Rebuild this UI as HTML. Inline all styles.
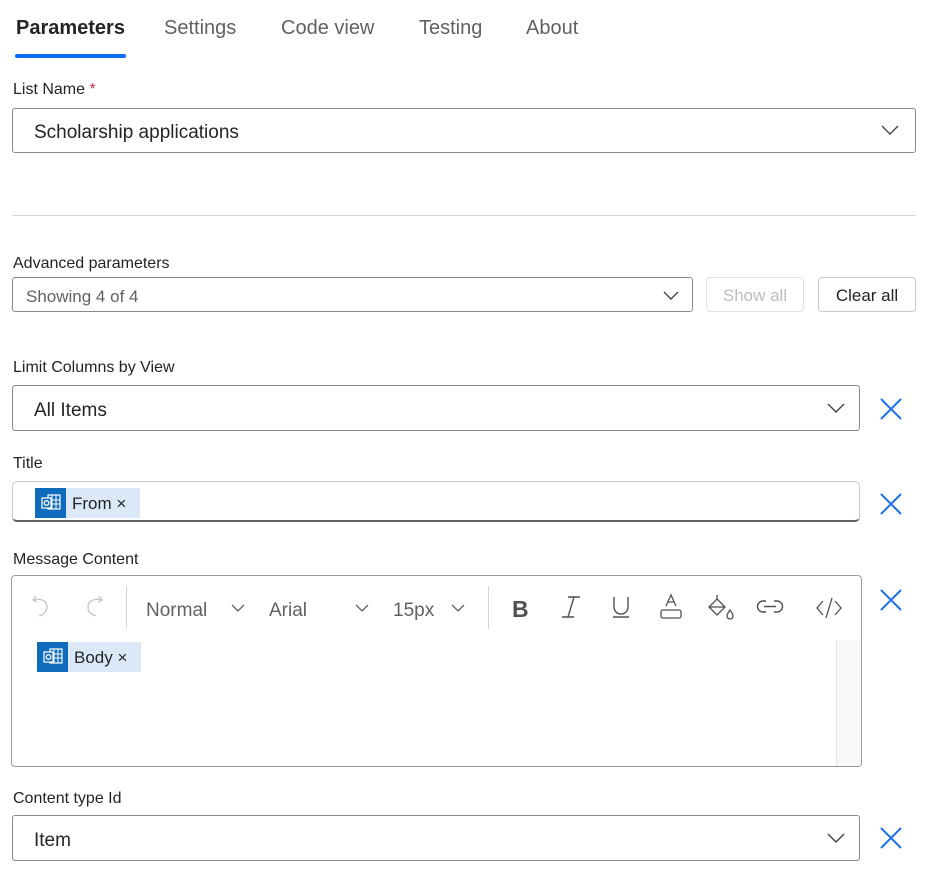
<!DOCTYPE html>
<html><head><meta charset="utf-8"><style>
*{box-sizing:border-box;margin:0;padding:0}
body{width:936px;height:888px;background:#fff;font-family:"Liberation Sans",sans-serif;color:#242424;position:relative;overflow:hidden}
.a{position:absolute;white-space:nowrap}
.tab{font-size:20px;color:#616161;top:17px}
.lbl{font-size:16px;color:#242424}
.box{position:absolute;border:1px solid #8a8a8a;border-radius:3px;background:#fff}
.big{font-size:19px;color:#242424}
.chev{position:absolute}
.x{position:absolute}
.chip{position:absolute;height:30px;background:#dbe8f8;display:flex;align-items:center;font-size:17px;color:#242424;padding-top:2px}
.chip .ic{width:31px;height:30px;background:#0f6cbd;display:flex;align-items:center;justify-content:center;margin-right:6px;margin-top:-2px}
.btn{position:absolute;border:1px solid #c8c8c8;border-radius:4px;font-size:17px;display:flex;align-items:center;justify-content:center;padding-top:2px}
</style></head><body>
<div class="a tab" style="left:16px;font-weight:bold;color:#242424">Parameters</div>
<div class="a" style="left:15px;top:54px;width:111px;height:4px;border-radius:2px;background:#0f6cfd"></div>
<div class="a tab" style="left:164px">Settings</div>
<div class="a tab" style="left:281px">Code view</div>
<div class="a tab" style="left:419px">Testing</div>
<div class="a tab" style="left:526px">About</div>

<div class="a lbl" style="left:13px;top:81px">List Name <span style="color:#c4314b">*</span></div>
<div class="box" style="left:12px;top:108px;width:904px;height:45px"></div>
<div class="a big" style="left:34px;top:122px">Scholarship applications</div>
<svg class="chev" style="left:880px;top:124px" width="20" height="12"><path d="M2 2l8 8 8-8" fill="none" stroke="#424242" stroke-width="1.4"/></svg>

<div class="a" style="left:12px;top:215px;width:904px;height:1px;background:#d6d6d6"></div>

<div class="a lbl" style="left:13px;top:255px">Advanced parameters</div>
<div class="box" style="left:12px;top:277px;width:681px;height:35px"></div>
<div class="a" style="left:26px;top:287px;font-size:17px;color:#616161">Showing 4 of 4</div>
<svg class="chev" style="left:662px;top:290px" width="18" height="11"><path d="M2 2l7 7 7-7" fill="none" stroke="#424242" stroke-width="1.4"/></svg>
<div class="btn" style="left:706px;top:277px;width:98px;height:35px;color:#bdbdbd;border-color:#e0e0e0">Show all</div>
<div class="btn" style="left:818px;top:277px;width:98px;height:35px;color:#242424">Clear all</div>

<div class="a lbl" style="left:13px;top:359px">Limit Columns by View</div>
<div class="box" style="left:12px;top:385px;width:848px;height:46px"></div>
<div class="a big" style="left:34px;top:400px">All Items</div>
<svg class="chev" style="left:826px;top:402px" width="20" height="12"><path d="M2 2l8 8 8-8" fill="none" stroke="#424242" stroke-width="1.4"/></svg>
<svg class="x" style="left:879px;top:397px" width="24" height="24"><path d="M2 2l20 20M22 2L2 22" stroke="#1a6ff0" stroke-width="2"/></svg>

<div class="a lbl" style="left:13px;top:455px">Title</div>
<div class="box" style="left:12px;top:481px;width:848px;height:41px;border-color:#c8c8c8;border-bottom:2px solid #616161;border-radius:5px"></div>
<div class="chip" style="left:35px;top:488px;width:105px"><div class="ic"><svg width="20" height="18"><rect x="7" y="1" width="12" height="14" fill="none" stroke="#fff" stroke-width="1.2"/><path d="M11 1v14M15 1v14M7 6h12M7 10h12" stroke="#fff" stroke-width="1"/><rect x="1" y="4" width="9" height="10" fill="#0f6cbd" stroke="#fff" stroke-width="1.2"/><circle cx="5.5" cy="9" r="2.3" fill="none" stroke="#fff" stroke-width="1.3"/></svg></div>From ×</div>
<svg class="x" style="left:879px;top:492px" width="24" height="24"><path d="M2 2l20 20M22 2L2 22" stroke="#1a6ff0" stroke-width="2"/></svg>

<div class="a lbl" style="left:13px;top:551px">Message Content</div>
<div class="box" style="left:11px;top:575px;width:851px;height:192px;border-color:#9a9a9a;border-radius:4px"></div>
<div class="a" style="left:836px;top:640px;width:24px;height:126px;background:#f8f8f8;border-left:1px solid #e6e6e6"></div>
<svg class="a" style="left:30px;top:592px" width="80" height="30"><path d="M6 4l-3 4 4 2M3 8c6-2 14 0 14 7 0 5-4 8-8 9" fill="none" stroke="#c8c8c8" stroke-width="1.4"/><path d="M69 4l3 4-4 2M72 8c-6-2-14 0-14 7 0 5 4 8 8 9" fill="none" stroke="#c8c8c8" stroke-width="1.4"/></svg>
<div class="a" style="left:126px;top:586px;width:1px;height:43px;background:#d6d6d6"></div>
<div class="a" style="left:146px;top:600px;font-size:19px;color:#616161">Normal</div>
<svg class="chev" style="left:231px;top:604px" width="14" height="9"><path d="M1 1l6 6 6-6" fill="none" stroke="#616161" stroke-width="1.3"/></svg>
<div class="a" style="left:269px;top:600px;font-size:19px;color:#616161">Arial</div>
<svg class="chev" style="left:355px;top:604px" width="14" height="9"><path d="M1 1l6 6 6-6" fill="none" stroke="#616161" stroke-width="1.3"/></svg>
<div class="a" style="left:393px;top:600px;font-size:19px;color:#616161">15px</div>
<svg class="chev" style="left:451px;top:604px" width="14" height="9"><path d="M1 1l6 6 6-6" fill="none" stroke="#616161" stroke-width="1.3"/></svg>
<div class="a" style="left:488px;top:586px;width:1px;height:43px;background:#d6d6d6"></div>
<div class="a" style="left:512px;top:596px;font-size:23px;font-weight:bold;color:#505050">B</div>
<svg class="a" style="left:558px;top:595px" width="26" height="26"><path d="M10 2h12M4 22h12M16 2l-6 20" fill="none" stroke="#505050" stroke-width="1.4"/></svg>
<svg class="a" style="left:610px;top:595px" width="22" height="26"><path d="M4 2v10a7 7 0 0014 0V2M3 22h16" fill="none" stroke="#505050" stroke-width="1.4"/></svg>
<svg class="a" style="left:658px;top:593px" width="26" height="28"><path d="M8 13l5-11 5 11M10 9h6" fill="none" stroke="#505050" stroke-width="1.3"/><rect x="3" y="17" width="20" height="8" rx="2" fill="none" stroke="#505050" stroke-width="1.3"/></svg>
<svg class="a" style="left:706px;top:593px" width="30" height="28"><path d="M11 2v5M11 6l8 8-8 8-8-8z" fill="none" stroke="#505050" stroke-width="1.3"/><path d="M4 14h14" stroke="#505050" stroke-width="1.3"/><path d="M24 17c-2 3-3 4-3 6a3 3 0 006 0c0-2-1-3-3-6z" fill="none" stroke="#505050" stroke-width="1.3"/></svg>
<svg class="a" style="left:756px;top:598px" width="28" height="18"><path d="M10 3H7a5.5 5.5 0 000 11h3M18 3h3a5.5 5.5 0 010 11h-3M8 8.5h12" fill="none" stroke="#505050" stroke-width="1.4"/></svg>
<svg class="a" style="left:815px;top:596px" width="28" height="24"><path d="M8 5l-6 7 6 7M20 5l6 7-6 7M17 2l-6 20" fill="none" stroke="#505050" stroke-width="1.3"/></svg>
<div class="chip" style="left:37px;top:642px;width:104px"><div class="ic"><svg width="20" height="18"><rect x="7" y="1" width="12" height="14" fill="none" stroke="#fff" stroke-width="1.2"/><path d="M11 1v14M15 1v14M7 6h12M7 10h12" stroke="#fff" stroke-width="1"/><rect x="1" y="4" width="9" height="10" fill="#0f6cbd" stroke="#fff" stroke-width="1.2"/><circle cx="5.5" cy="9" r="2.3" fill="none" stroke="#fff" stroke-width="1.3"/></svg></div>Body ×</div>
<svg class="x" style="left:879px;top:588px" width="24" height="24"><path d="M2 2l20 20M22 2L2 22" stroke="#1a6ff0" stroke-width="2"/></svg>

<div class="a lbl" style="left:13px;top:790px">Content type Id</div>
<div class="box" style="left:12px;top:815px;width:848px;height:46px"></div>
<div class="a big" style="left:34px;top:830px">Item</div>
<svg class="chev" style="left:826px;top:832px" width="20" height="12"><path d="M2 2l8 8 8-8" fill="none" stroke="#424242" stroke-width="1.4"/></svg>
<svg class="x" style="left:879px;top:826px" width="24" height="24"><path d="M2 2l20 20M22 2L2 22" stroke="#1a6ff0" stroke-width="2"/></svg>
</body></html>
